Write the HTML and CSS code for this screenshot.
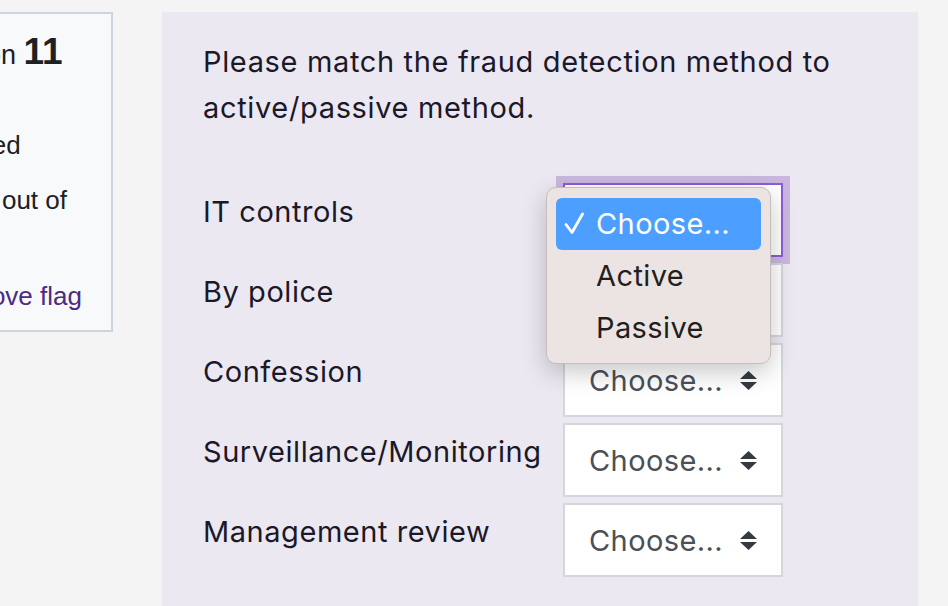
FILE: index.html
```html
<!DOCTYPE html>
<html lang="en">
<head>
<meta charset="utf-8">
<title>Question 11</title>
<link rel="stylesheet" href="styles.css">
</head>
<body>
<div class="page">
  <aside class="info">
    <h3 class="qno">Question <span class="num">11</span></h3>
    <div class="state">Not yet answered</div>
    <div class="grade">Marked out of 1.00</div>
    <div class="flag"><svg class="flag-icon" width="22" height="22" viewBox="0 0 22 22"><path d="M4 2v19M4 3h13l-3 4 3 4H4" fill="#c00" stroke="#c00" stroke-width="2"/></svg><a href="#" class="flag-link">Remove flag</a></div>
  </aside>
  <main class="content">
    <p class="qtext">Please match the fraud detection method to active/passive method.</p>
    <div class="rows">
      <div class="row">
        <label class="lbl">IT controls</label>
        <div class="sel focused">
          <div class="menu">
            <div class="opt chosen"><svg class="check" width="20" height="22" viewBox="0 0 20 22"><path d="M2 12.5 8 20.5 18.5 2" fill="none" stroke="#fff" stroke-width="2.8" stroke-linecap="round" stroke-linejoin="round"/></svg>Choose...</div>
            <div class="opt">Active</div>
            <div class="opt">Passive</div>
          </div>
        </div>
      </div>
      <div class="row">
        <label class="lbl">By police</label>
        <div class="sel"><span class="val">Choose...</span><svg class="arrows" width="17" height="19" viewBox="0 0 17 19"><path d="M0 8 8.5 0 17 8Z M0 11 8.5 19 17 11Z" fill="#343a40"/></svg></div>
      </div>
      <div class="row">
        <label class="lbl">Confession</label>
        <div class="sel"><span class="val">Choose...</span><svg class="arrows" width="17" height="19" viewBox="0 0 17 19"><path d="M0 8 8.5 0 17 8Z M0 11 8.5 19 17 11Z" fill="#343a40"/></svg></div>
      </div>
      <div class="row">
        <label class="lbl">Surveillance/Monitoring</label>
        <div class="sel"><span class="val">Choose...</span><svg class="arrows" width="17" height="19" viewBox="0 0 17 19"><path d="M0 8 8.5 0 17 8Z M0 11 8.5 19 17 11Z" fill="#343a40"/></svg></div>
      </div>
      <div class="row">
        <label class="lbl">Management review</label>
        <div class="sel"><span class="val">Choose...</span><svg class="arrows" width="17" height="19" viewBox="0 0 17 19"><path d="M0 8 8.5 0 17 8Z M0 11 8.5 19 17 11Z" fill="#343a40"/></svg></div>
      </div>
    </div>
  </main>
</div>
</body>
</html>
```
FILE: styles.css
```css
html, body {
  margin: 0;
  padding: 0;
  background: #f4f4f4;
  overflow: hidden;
  height: 100%;
}
body {
  font-family: "Liberation Sans", Arial, sans-serif;
  color: #1d2125;
}
.page {
  display: flex;
  align-items: flex-start;
  padding-top: 12px;
}
.info {
  box-sizing: border-box;
  flex: none;
  width: 219px;
  height: 320px;
  margin-left: -106px;
  border: 2px solid #cdd4dc;
  background: #f8f9fa;
  padding: 14px 24px 0 12px;
  font-size: 26px;
  line-height: 37px;
  color: #1d2125;
}
.qno {
  margin: 0 0 11px;
  font-weight: normal;
  font-size: 27px;
  line-height: 48px;
}
.num {
  font-weight: bold;
  font-size: 37px;
}
.state { margin-bottom: 18px; }
.grade { margin-bottom: 22px; }
.flag { display: flex; align-items: center; gap: 6px; }
.flag-icon { flex: none; }
.flag-link { color: #4c2a85; text-decoration: none; }

.content {
  box-sizing: border-box;
  flex: none;
  width: 756px;
  height: 620px;
  margin-left: 49px;
  background: #ebe8f2;
  padding: 27px 41px 0;
}
.qtext {
  margin: 0 0 52px;
  font-family: Inter, "Liberation Sans", sans-serif;
  font-size: 29px;
  line-height: 46px;
  letter-spacing: 0.65px;
  color: #1b1828;
  width: 670px;
}
.rows {
  display: flex;
  flex-direction: column;
  gap: 6px;
}
.row {
  display: flex;
  align-items: flex-start;
}
.lbl {
  flex: none;
  width: 360px;
  padding-top: 8px;
  font-family: Inter, "Liberation Sans", sans-serif;
  font-size: 29px;
  letter-spacing: 0.55px;
  line-height: 42px;
  color: #1b1828;
}
.sel {
  position: relative;
  box-sizing: border-box;
  width: 220px;
  height: 74px;
  border: 2px solid #d3d7dd;
  background: #fff;
  display: flex;
  align-items: center;
  padding: 0 24px 0 24px;
  font-family: Inter, "Liberation Sans", sans-serif;
  font-size: 29px;
  letter-spacing: 0.4px;
  color: #495057;
}
.val { flex: 1; }
.arrows { flex: none; }
.sel.focused {
  border-color: #8d5cd6;
  box-shadow: 0 0 0 7px rgba(160, 125, 200, 0.45);
}
.menu {
  position: absolute;
  left: -19px;
  top: 2px;
  z-index: 5;
  box-sizing: border-box;
  width: 225px;
  height: 177px;
  padding: 10px 9px;
  background: #ece4e2;
  border: 1px solid #c6bebd;
  border-radius: 10px;
  box-shadow: 0 8px 24px rgba(0, 0, 0, 0.22);
  font-family: Inter, "Liberation Sans", sans-serif;
  font-size: 29px;
  letter-spacing: 0.4px;
  color: #1f1f1f;
}
.opt {
  position: relative;
  height: 52px;
  line-height: 52px;
  padding-left: 40px;
  border-radius: 6px;
}
.opt.chosen {
  background: #4c9ffe;
  color: #fff;
}
.check {
  position: absolute;
  left: 8px;
  top: 14px;
}
```
